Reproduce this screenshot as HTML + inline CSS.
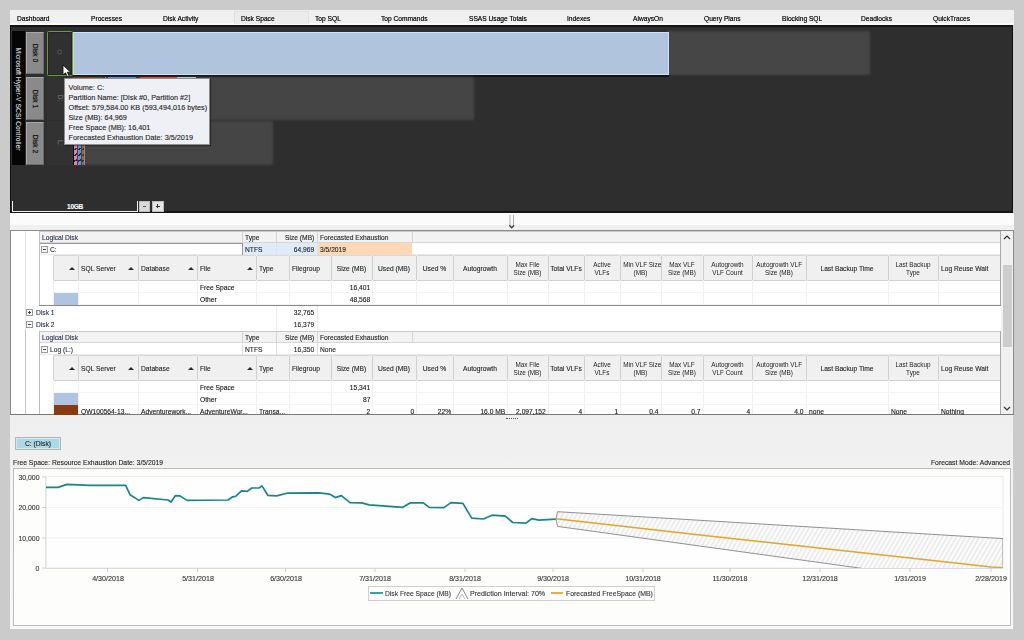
<!DOCTYPE html><html><head><meta charset="utf-8"><style>
html,body{margin:0;padding:0;}
body{width:1024px;height:640px;overflow:hidden;position:relative;background:#cbcbcb;font-family:"Liberation Sans",sans-serif;font-size:7px;color:#222;}
div{box-sizing:border-box;}
.t{position:absolute;white-space:nowrap;line-height:10px;height:10px;font-size:7.6px;transform:scaleX(0.88);-webkit-text-stroke:0.12px currentColor;}
</style></head><body>
<div style="position:absolute;left:10px;top:10px;width:1004px;height:15px;background:#f0f0f0;"></div>
<div style="position:absolute;left:10px;top:23px;width:1004px;height:2px;background:#fafafa;"></div>
<div style="position:absolute;left:234px;top:11px;width:75px;height:13px;background:#ececec;border:1px solid #e0e0e0;border-bottom:none;"></div>
<div class="t" style="left:17px;top:13.5px;transform-origin:0 50%;color:#0d0d0d;font-size:8px;transform:scaleX(0.83);text-shadow:0 0 0.3px #888;">Dashboard</div>
<div class="t" style="left:91px;top:13.5px;transform-origin:0 50%;color:#0d0d0d;font-size:8px;transform:scaleX(0.83);text-shadow:0 0 0.3px #888;">Processes</div>
<div class="t" style="left:163px;top:13.5px;transform-origin:0 50%;color:#0d0d0d;font-size:8px;transform:scaleX(0.83);text-shadow:0 0 0.3px #888;">Disk Activity</div>
<div class="t" style="left:241px;top:13.5px;transform-origin:0 50%;color:#0d0d0d;font-size:8px;transform:scaleX(0.83);text-shadow:0 0 0.3px #888;">Disk Space</div>
<div class="t" style="left:315px;top:13.5px;transform-origin:0 50%;color:#0d0d0d;font-size:8px;transform:scaleX(0.83);text-shadow:0 0 0.3px #888;">Top SQL</div>
<div class="t" style="left:381px;top:13.5px;transform-origin:0 50%;color:#0d0d0d;font-size:8px;transform:scaleX(0.83);text-shadow:0 0 0.3px #888;">Top Commands</div>
<div class="t" style="left:469px;top:13.5px;transform-origin:0 50%;color:#0d0d0d;font-size:8px;transform:scaleX(0.83);text-shadow:0 0 0.3px #888;">SSAS Usage Totals</div>
<div class="t" style="left:567px;top:13.5px;transform-origin:0 50%;color:#0d0d0d;font-size:8px;transform:scaleX(0.83);text-shadow:0 0 0.3px #888;">Indexes</div>
<div class="t" style="left:633px;top:13.5px;transform-origin:0 50%;color:#0d0d0d;font-size:8px;transform:scaleX(0.83);text-shadow:0 0 0.3px #888;">AlwaysOn</div>
<div class="t" style="left:704px;top:13.5px;transform-origin:0 50%;color:#0d0d0d;font-size:8px;transform:scaleX(0.83);text-shadow:0 0 0.3px #888;">Query Plans</div>
<div class="t" style="left:782px;top:13.5px;transform-origin:0 50%;color:#0d0d0d;font-size:8px;transform:scaleX(0.83);text-shadow:0 0 0.3px #888;">Blocking SQL</div>
<div class="t" style="left:861px;top:13.5px;transform-origin:0 50%;color:#0d0d0d;font-size:8px;transform:scaleX(0.83);text-shadow:0 0 0.3px #888;">Deadlocks</div>
<div class="t" style="left:933px;top:13.5px;transform-origin:0 50%;color:#0d0d0d;font-size:8px;transform:scaleX(0.83);text-shadow:0 0 0.3px #888;">QuickTraces</div>
<div style="position:absolute;left:10px;top:25px;width:1003px;height:188px;background:#2e2e2e;border:1px solid #111;border-top:2px solid #151515;border-bottom:2px solid #151515;"></div>
<div style="position:absolute;left:12px;top:31px;width:13px;height:134px;background:#050505;"></div>
<div class="t" style="left:-52.5px;top:93.5px;width:140px;text-align:center;color:#dcdcdc;transform:rotate(90deg) scaleX(0.89);font-size:7.6px;">Microsoft Hyper-V SCSI Controller</div>
<div style="position:absolute;left:26px;top:32px;width:18px;height:42px;background:#8a8a8a;border:1px solid #a9a9a9;border-right-color:#6a6a6a;border-bottom-color:#6a6a6a;"></div>
<div class="t" style="left:15px;top:48.0px;width:40px;text-align:center;color:#111;-webkit-text-stroke:0.25px #111;transform:rotate(90deg) scaleX(0.88);font-size:7.6px;">Disk 0</div>
<div style="position:absolute;left:26px;top:77px;width:18px;height:43px;background:#8a8a8a;border:1px solid #a9a9a9;border-right-color:#6a6a6a;border-bottom-color:#6a6a6a;"></div>
<div class="t" style="left:15px;top:93.5px;width:40px;text-align:center;color:#111;-webkit-text-stroke:0.25px #111;transform:rotate(90deg) scaleX(0.88);font-size:7.6px;">Disk 1</div>
<div style="position:absolute;left:26px;top:122px;width:18px;height:43px;background:#8a8a8a;border:1px solid #a9a9a9;border-right-color:#6a6a6a;border-bottom-color:#6a6a6a;"></div>
<div class="t" style="left:15px;top:138.5px;width:40px;text-align:center;color:#111;-webkit-text-stroke:0.25px #111;transform:rotate(90deg) scaleX(0.88);font-size:7.6px;">Disk 2</div>
<div style="position:absolute;left:667px;top:31px;width:203px;height:44px;background:#464646;filter:blur(1.2px);"></div>
<div style="position:absolute;left:47px;top:30.75px;width:26.299999999999997px;height:44.75px;background:#303030;border:1.4px solid #6c9c30;border-radius:1.5px;box-shadow:inset 0 0 0 1px #242424;"></div>
<svg style="position:absolute;left:56px;top:48px;" width="8" height="8" viewBox="0 0 8 8"><circle cx="3.7" cy="4.1" r="2.1" fill="none" stroke="#5a5a5a" stroke-width="0.9"/></svg>
<div style="position:absolute;left:73.3px;top:75px;width:595.7px;height:1.5px;background:#141414;"></div>
<div style="position:absolute;left:73.3px;top:31.5px;width:595.7px;height:43.5px;background:#b0c4de;border:1px solid #cfe0f7;border-left-color:#c4d6f0;"></div>
<div style="position:absolute;left:47px;top:76px;width:26px;height:44px;background:#323232;"></div>
<div style="position:absolute;left:73px;top:76.5px;width:401px;height:43.5px;background:#454545;filter:blur(1.2px);"></div>
<div style="position:absolute;left:73px;top:76.5px;width:17.5px;height:2.0px;background:#8a3b1c;"></div>
<div style="position:absolute;left:90.5px;top:76.5px;width:12.5px;height:2.0px;background:#4d5b2b;"></div>
<div style="position:absolute;left:104.5px;top:76.5px;width:1.5px;height:2.0px;background:#d07aa0;"></div>
<div style="position:absolute;left:107.5px;top:76.5px;width:28.5px;height:2.0px;background:#4a8fe0;"></div>
<div style="position:absolute;left:139.5px;top:76.5px;width:37.0px;height:2.0px;background:#e04a2c;"></div>
<div style="position:absolute;left:176.5px;top:76.5px;width:19.5px;height:2.0px;background:#b3c6dc;"></div>
<div class="t" style="left:50px;top:93px;width:20px;text-align:center;color:#6a6a6a;transform:rotate(90deg);font-size:7px;">D:</div>
<div style="position:absolute;left:47px;top:121px;width:26px;height:44px;background:#323232;"></div>
<div style="position:absolute;left:73px;top:121px;width:200px;height:44px;background:#454545;filter:blur(1.2px);"></div>
<div class="t" style="left:50px;top:138px;width:20px;text-align:center;color:#6a6a6a;transform:rotate(90deg);font-size:7px;">L:</div>
<div style="position:absolute;left:72.5px;top:144.5px;width:1.2000000000000028px;height:20.5px;background:#080808;"></div>
<div style="position:absolute;left:73.7px;top:144.5px;width:3.799999999999997px;height:20.5px;background:repeating-linear-gradient(150deg,#e87cae 0 3.6px,#3a2a30 3.6px 5px);"></div>
<div style="position:absolute;left:77.7px;top:144.5px;width:3.799999999999997px;height:20.5px;background:repeating-linear-gradient(150deg,#4e9cf0 0 3.6px,#1e2a3a 3.6px 5px);"></div>
<div style="position:absolute;left:81.7px;top:144.5px;width:2.200000000000003px;height:20.5px;background:repeating-linear-gradient(150deg,#b85a18 0 3.6px,#4a2a10 3.6px 5px);"></div>
<div style="position:absolute;left:84px;top:144.5px;width:1px;height:20.5px;background:#7d8fb0;"></div>
<div style="position:absolute;left:12px;top:201px;width:125.5px;height:11px;border:1px solid #f2f2f2;border-top:none;"></div>
<div class="t" style="left:-25px;width:200px;top:201.5px;text-align:center;transform-origin:50% 50%;color:#fff;font-weight:bold;font-size:6.5px;letter-spacing:-0.3px;transform:none;">10GB</div>
<div style="position:absolute;left:139px;top:201px;width:10.5px;height:10.5px;background:#d9d9d9;border:1px solid #bdbdbd;"></div>
<div style="position:absolute;left:151.5px;top:201px;width:12.0px;height:10.5px;background:#e6e6e6;border:1px solid #bdbdbd;"></div>
<div style="position:absolute;left:142.5px;top:205.5px;width:3px;height:1px;background:#555;"></div>
<div style="position:absolute;left:155.5px;top:205.5px;width:4px;height:1px;background:#333;"></div><div style="position:absolute;left:157px;top:204px;width:1px;height:4px;background:#333;"></div>
<div style="position:absolute;left:64px;top:78px;width:146px;height:66.5px;background:#eff0f5;border:1px solid #8e8e8e;box-shadow:1px 1px 1px rgba(0,0,0,.35);"></div>
<div class="t" style="left:68.5px;top:82.6px;transform-origin:0 50%;color:#262626;font-size:7.3px;letter-spacing:0;transform:none;">Volume: C:</div>
<div class="t" style="left:68.5px;top:92.6px;transform-origin:0 50%;color:#262626;font-size:7.3px;letter-spacing:0;transform:none;">Partition Name: [Disk #0, Partition #2]</div>
<div class="t" style="left:68.5px;top:102.6px;transform-origin:0 50%;color:#262626;font-size:7.3px;letter-spacing:0;transform:none;">Offset: 579,584.00 KB (593,494,016 bytes)</div>
<div class="t" style="left:68.5px;top:112.6px;transform-origin:0 50%;color:#262626;font-size:7.3px;letter-spacing:0;transform:none;">Size (MB): 64,969</div>
<div class="t" style="left:68.5px;top:122.6px;transform-origin:0 50%;color:#262626;font-size:7.3px;letter-spacing:0;transform:none;">Free Space (MB): 16,401</div>
<div class="t" style="left:68.5px;top:132.6px;transform-origin:0 50%;color:#262626;font-size:7.3px;letter-spacing:0;transform:none;">Forecasted Exhaustion Date: 3/5/2019</div>
<svg style="position:absolute;left:62px;top:64px;" width="12" height="14" viewBox="0 0 12 14"><path d="M1 1 L1 11 L3.5 8.8 L5.5 13 L7.2 12.2 L5.3 8.2 L8.6 8.2 Z" fill="#fff" stroke="#000" stroke-width="0.8"/></svg>
<div style="position:absolute;left:10px;top:213px;width:1004px;height:12px;background:#fbfbfb;"></div>
<div style="position:absolute;left:10px;top:225px;width:1004px;height:5px;background:#f0f0f0;"></div>
<svg style="position:absolute;left:507px;top:214px;" width="9" height="15" viewBox="0 0 9 15"><path d="M3 1 V11.5 M6.5 1 V11.5" stroke="#9a9a9a" stroke-width="0.8" fill="none"/><path d="M2.3 11.2 L4.7 13.7 L7.1 11.2" stroke="#3a3a3a" stroke-width="1.3" fill="none"/></svg>
<div style="position:absolute;left:10px;top:230px;width:1004px;height:185px;background:#fff;border:1px solid #8c8c8c;border-bottom:1px solid #777;"></div>
<div style="position:absolute;left:25px;top:231px;width:1px;height:183px;background:#e6e6e6;"></div>
<div style="position:absolute;left:39px;top:231px;width:1px;height:183px;background:#e6e6e6;"></div>
<div style="position:absolute;left:39px;top:231px;width:961px;height:12px;background:#f2f2f2;border-top:1px solid #c8c8c8;border-bottom:1px solid #d6d6d6;border-left:1px solid #c8c8c8;"></div>
<div style="position:absolute;left:242px;top:232px;width:1px;height:11px;background:#d4d4d4;"></div>
<div style="position:absolute;left:276px;top:232px;width:1px;height:11px;background:#d4d4d4;"></div>
<div style="position:absolute;left:317px;top:232px;width:1px;height:11px;background:#d4d4d4;"></div>
<div style="position:absolute;left:412px;top:232px;width:1px;height:11px;background:#d4d4d4;"></div>
<div class="t" style="left:41.5px;top:232.5px;transform-origin:0 50%;color:#1f2a44;">Logical Disk</div>
<div class="t" style="left:245px;top:232.5px;transform-origin:0 50%;color:#222;">Type</div>
<div class="t" style="right:710px;top:232.5px;text-align:right;transform-origin:100% 50%;color:#222;">Size (MB)</div>
<div class="t" style="left:320px;top:232.5px;transform-origin:0 50%;color:#222;">Forecasted Exhaustion</div>
<div style="position:absolute;left:39px;top:243px;width:961px;height:12px;background:#fff;border-left:1px solid #c8c8c8;border-bottom:1px solid #e8e8e8;"></div>
<div style="position:absolute;left:41px;top:246px;width:7px;height:7px;border:1px solid #9a9a9a;background:#f6f6f6;"></div>
<div style="position:absolute;left:43px;top:249px;width:3px;height:1px;background:#444;"></div>
<div class="t" style="left:50px;top:245px;transform-origin:0 50%;color:#1f2a44;">C:</div>
<div style="position:absolute;left:242px;top:243px;width:34px;height:12px;background:#deebf8;"></div>
<div style="position:absolute;left:276px;top:243px;width:41px;height:12px;background:#deebf8;"></div>
<div style="position:absolute;left:317px;top:243px;width:95px;height:12px;background:#fdd8b5;"></div>
<div style="position:absolute;left:276px;top:243px;width:1px;height:12px;background:#e2e2e2;"></div>
<div style="position:absolute;left:317px;top:243px;width:1px;height:12px;background:#e2e2e2;"></div>
<div style="position:absolute;left:39px;top:243px;width:204px;height:12.5px;border:1px solid #9a9a9a;"></div>
<div class="t" style="left:245px;top:245px;transform-origin:0 50%;color:#222;">NTFS</div>
<div class="t" style="right:710px;top:245px;text-align:right;transform-origin:100% 50%;color:#222;">64,969</div>
<div class="t" style="left:320px;top:245px;transform-origin:0 50%;color:#222;">3/5/2019</div>
<div style="position:absolute;left:39px;top:255px;width:961px;height:50px;background:#fff;border-left:1px solid #c8c8c8;"></div>
<div style="position:absolute;left:53px;top:255px;width:947px;height:26px;background:#f0f0f0;border-top:1px solid #d8d8d8;border-bottom:1px solid #d0d0d0;"></div>
<div style="position:absolute;left:53px;top:255px;width:1px;height:50px;background:#f0f0f0;"></div>
<div style="position:absolute;left:78px;top:255px;width:1px;height:50px;background:#f0f0f0;"></div>
<div style="position:absolute;left:137.5px;top:255px;width:1.0px;height:50px;background:#f0f0f0;"></div>
<div style="position:absolute;left:197px;top:255px;width:1px;height:50px;background:#f0f0f0;"></div>
<div style="position:absolute;left:256px;top:255px;width:1px;height:50px;background:#f0f0f0;"></div>
<div style="position:absolute;left:289px;top:255px;width:1px;height:50px;background:#f0f0f0;"></div>
<div style="position:absolute;left:331px;top:255px;width:1px;height:50px;background:#f0f0f0;"></div>
<div style="position:absolute;left:372px;top:255px;width:1px;height:50px;background:#f0f0f0;"></div>
<div style="position:absolute;left:416px;top:255px;width:1px;height:50px;background:#f0f0f0;"></div>
<div style="position:absolute;left:453px;top:255px;width:1px;height:50px;background:#f0f0f0;"></div>
<div style="position:absolute;left:507px;top:255px;width:1px;height:50px;background:#f0f0f0;"></div>
<div style="position:absolute;left:548px;top:255px;width:1px;height:50px;background:#f0f0f0;"></div>
<div style="position:absolute;left:584px;top:255px;width:1px;height:50px;background:#f0f0f0;"></div>
<div style="position:absolute;left:620px;top:255px;width:1px;height:50px;background:#f0f0f0;"></div>
<div style="position:absolute;left:661px;top:255px;width:1px;height:50px;background:#f0f0f0;"></div>
<div style="position:absolute;left:703px;top:255px;width:1px;height:50px;background:#f0f0f0;"></div>
<div style="position:absolute;left:752px;top:255px;width:1px;height:50px;background:#f0f0f0;"></div>
<div style="position:absolute;left:806px;top:255px;width:1px;height:50px;background:#f0f0f0;"></div>
<div style="position:absolute;left:888px;top:255px;width:1px;height:50px;background:#f0f0f0;"></div>
<div style="position:absolute;left:938px;top:255px;width:1px;height:50px;background:#f0f0f0;"></div>
<div style="position:absolute;left:53px;top:256px;width:1px;height:24px;background:#d0d0d0;"></div>
<div style="position:absolute;left:78px;top:256px;width:1px;height:24px;background:#d0d0d0;"></div>
<div style="position:absolute;left:137.5px;top:256px;width:1.0px;height:24px;background:#d0d0d0;"></div>
<div style="position:absolute;left:197px;top:256px;width:1px;height:24px;background:#d0d0d0;"></div>
<div style="position:absolute;left:256px;top:256px;width:1px;height:24px;background:#d0d0d0;"></div>
<div style="position:absolute;left:289px;top:256px;width:1px;height:24px;background:#d0d0d0;"></div>
<div style="position:absolute;left:331px;top:256px;width:1px;height:24px;background:#d0d0d0;"></div>
<div style="position:absolute;left:372px;top:256px;width:1px;height:24px;background:#d0d0d0;"></div>
<div style="position:absolute;left:416px;top:256px;width:1px;height:24px;background:#d0d0d0;"></div>
<div style="position:absolute;left:453px;top:256px;width:1px;height:24px;background:#d0d0d0;"></div>
<div style="position:absolute;left:507px;top:256px;width:1px;height:24px;background:#d0d0d0;"></div>
<div style="position:absolute;left:548px;top:256px;width:1px;height:24px;background:#d0d0d0;"></div>
<div style="position:absolute;left:584px;top:256px;width:1px;height:24px;background:#d0d0d0;"></div>
<div style="position:absolute;left:620px;top:256px;width:1px;height:24px;background:#d0d0d0;"></div>
<div style="position:absolute;left:661px;top:256px;width:1px;height:24px;background:#d0d0d0;"></div>
<div style="position:absolute;left:703px;top:256px;width:1px;height:24px;background:#d0d0d0;"></div>
<div style="position:absolute;left:752px;top:256px;width:1px;height:24px;background:#d0d0d0;"></div>
<div style="position:absolute;left:806px;top:256px;width:1px;height:24px;background:#d0d0d0;"></div>
<div style="position:absolute;left:888px;top:256px;width:1px;height:24px;background:#d0d0d0;"></div>
<div style="position:absolute;left:938px;top:256px;width:1px;height:24px;background:#d0d0d0;"></div>
<div style="position:absolute;left:1000px;top:256px;width:1px;height:24px;background:#d0d0d0;"></div>
<div class="t" style="left:53px;top:264.0px;width:25px;text-align:center;color:#222;"></div>
<div class="t" style="left:81px;top:264.0px;transform-origin:0 50%;color:#222;">SQL Server</div>
<div class="t" style="left:140.5px;top:264.0px;transform-origin:0 50%;color:#222;">Database</div>
<div class="t" style="left:200px;top:264.0px;transform-origin:0 50%;color:#222;">File</div>
<div class="t" style="left:259px;top:264.0px;transform-origin:0 50%;color:#222;">Type</div>
<div class="t" style="left:292px;top:264.0px;transform-origin:0 50%;color:#222;">Filegroup</div>
<div class="t" style="left:331px;top:264.0px;width:41px;text-align:center;color:#222;">Size (MB)</div>
<div class="t" style="left:372px;top:264.0px;width:44px;text-align:center;color:#222;">Used (MB)</div>
<div class="t" style="left:416px;top:264.0px;width:37px;text-align:center;color:#222;">Used %</div>
<div class="t" style="left:453px;top:264.0px;width:54px;text-align:center;color:#222;">Autogrowth</div>
<div style="position:absolute;left:507px;top:261.0px;width:41px;text-align:center;line-height:8px;white-space:nowrap;color:#222;font-size:7.6px;transform:scaleX(0.84);">Max File<br>Size (MB)</div>
<div class="t" style="left:548px;top:264.0px;width:36px;text-align:center;color:#222;">Total VLFs</div>
<div style="position:absolute;left:584px;top:261.0px;width:36px;text-align:center;line-height:8px;white-space:nowrap;color:#222;font-size:7.6px;transform:scaleX(0.84);">Active<br>VLFs</div>
<div style="position:absolute;left:620px;top:261.0px;width:41px;text-align:center;line-height:8px;white-space:nowrap;color:#222;font-size:7.6px;transform:scaleX(0.84);">Min VLF Size<br>(MB)</div>
<div style="position:absolute;left:661px;top:261.0px;width:42px;text-align:center;line-height:8px;white-space:nowrap;color:#222;font-size:7.6px;transform:scaleX(0.84);">Max VLF<br>Size (MB)</div>
<div style="position:absolute;left:703px;top:261.0px;width:49px;text-align:center;line-height:8px;white-space:nowrap;color:#222;font-size:7.6px;transform:scaleX(0.84);">Autogrowth<br>VLF Count</div>
<div style="position:absolute;left:752px;top:261.0px;width:54px;text-align:center;line-height:8px;white-space:nowrap;color:#222;font-size:7.6px;transform:scaleX(0.84);">Autogrowth VLF<br>Size (MB)</div>
<div class="t" style="left:806px;top:264.0px;width:82px;text-align:center;color:#222;">Last Backup Time</div>
<div style="position:absolute;left:888px;top:261.0px;width:50px;text-align:center;line-height:8px;white-space:nowrap;color:#222;font-size:7.6px;transform:scaleX(0.84);">Last Backup<br>Type</div>
<div class="t" style="left:941px;top:264.0px;transform-origin:0 50%;color:#222;">Log Reuse Wait</div>
<div style="position:absolute;left:68.5px;top:267px;width:0;height:0;border-left:3px solid transparent;border-right:3px solid transparent;border-bottom:3.5px solid #2a2a2a;"></div>
<div style="position:absolute;left:128.0px;top:267px;width:0;height:0;border-left:3px solid transparent;border-right:3px solid transparent;border-bottom:3.5px solid #2a2a2a;"></div>
<div style="position:absolute;left:187.5px;top:267px;width:0;height:0;border-left:3px solid transparent;border-right:3px solid transparent;border-bottom:3.5px solid #2a2a2a;"></div>
<div style="position:absolute;left:246.5px;top:267px;width:0;height:0;border-left:3px solid transparent;border-right:3px solid transparent;border-bottom:3.5px solid #2a2a2a;"></div>
<div style="position:absolute;left:53px;top:292px;width:947px;height:1px;background:#f4f4f4;"></div>
<div class="t" style="left:200px;top:282.5px;transform-origin:0 50%;color:#111;">Free Space</div>
<div class="t" style="right:654px;top:282.5px;text-align:right;transform-origin:100% 50%;color:#111;">16,401</div>
<div style="position:absolute;left:53px;top:304px;width:947px;height:1px;background:#f4f4f4;"></div>
<div style="position:absolute;left:54px;top:293px;width:24px;height:12px;background:#aec4e0;"></div>
<div class="t" style="left:200px;top:294.5px;transform-origin:0 50%;color:#111;">Other</div>
<div class="t" style="right:654px;top:294.5px;text-align:right;transform-origin:100% 50%;color:#111;">48,568</div>
<div style="position:absolute;left:39px;top:305px;width:962px;height:1px;background:#888;"></div>
<div style="position:absolute;left:1000px;top:231px;width:1px;height:74px;background:#a8a8a8;"></div>
<div style="position:absolute;left:39px;top:231px;width:1px;height:74px;background:#c4c4c4;"></div>
<div style="position:absolute;left:11px;top:306px;width:989px;height:12px;background:#fff;"></div>
<div style="position:absolute;left:276px;top:306px;width:1px;height:12px;background:#ececec;"></div>
<div style="position:absolute;left:317px;top:306px;width:1px;height:12px;background:#ececec;"></div>
<div style="position:absolute;left:26px;top:309px;width:7px;height:7px;border:1px solid #9a9a9a;background:#f6f6f6;"></div>
<div style="position:absolute;left:28px;top:312px;width:3px;height:1px;background:#444;"></div>
<div style="position:absolute;left:29px;top:311px;width:1px;height:3px;background:#333;"></div>
<div class="t" style="left:36px;top:307.7px;transform-origin:0 50%;color:#1f2a44;">Disk 1</div>
<div class="t" style="right:710px;top:307.7px;text-align:right;transform-origin:100% 50%;color:#222;">32,765</div>
<div style="position:absolute;left:11px;top:318px;width:989px;height:12px;background:#fff;"></div>
<div style="position:absolute;left:276px;top:318px;width:1px;height:12px;background:#ececec;"></div>
<div style="position:absolute;left:317px;top:318px;width:1px;height:12px;background:#ececec;"></div>
<div style="position:absolute;left:26px;top:321px;width:7px;height:7px;border:1px solid #9a9a9a;background:#f6f6f6;"></div>
<div style="position:absolute;left:28px;top:324px;width:3px;height:1px;background:#444;"></div>
<div class="t" style="left:36px;top:319.7px;transform-origin:0 50%;color:#1f2a44;">Disk 2</div>
<div class="t" style="right:710px;top:319.7px;text-align:right;transform-origin:100% 50%;color:#222;">16,379</div>
<div style="position:absolute;left:25px;top:306px;width:1px;height:108px;background:#e6e6e6;"></div>
<div style="position:absolute;left:25px;top:330px;width:1px;height:84px;background:#c4c4c4;"></div>
<div style="position:absolute;left:39px;top:331px;width:961px;height:12px;background:#f2f2f2;border-top:1px solid #c8c8c8;border-bottom:1px solid #d6d6d6;border-left:1px solid #c8c8c8;"></div>
<div style="position:absolute;left:242px;top:332px;width:1px;height:11px;background:#d4d4d4;"></div>
<div style="position:absolute;left:276px;top:332px;width:1px;height:11px;background:#d4d4d4;"></div>
<div style="position:absolute;left:317px;top:332px;width:1px;height:11px;background:#d4d4d4;"></div>
<div style="position:absolute;left:412px;top:332px;width:1px;height:11px;background:#d4d4d4;"></div>
<div class="t" style="left:41.5px;top:332.5px;transform-origin:0 50%;color:#1f2a44;">Logical Disk</div>
<div class="t" style="left:245px;top:332.5px;transform-origin:0 50%;color:#222;">Type</div>
<div class="t" style="right:710px;top:332.5px;text-align:right;transform-origin:100% 50%;color:#222;">Size (MB)</div>
<div class="t" style="left:320px;top:332.5px;transform-origin:0 50%;color:#222;">Forecasted Exhaustion</div>
<div style="position:absolute;left:39px;top:343px;width:961px;height:12px;background:#fff;border-left:1px solid #c8c8c8;border-bottom:1px solid #e8e8e8;"></div>
<div style="position:absolute;left:41px;top:346px;width:7px;height:7px;border:1px solid #9a9a9a;background:#f6f6f6;"></div>
<div style="position:absolute;left:43px;top:349px;width:3px;height:1px;background:#444;"></div>
<div class="t" style="left:50px;top:345px;transform-origin:0 50%;color:#1f2a44;">Log (L:)</div>
<div style="position:absolute;left:276px;top:343px;width:1px;height:12px;background:#e2e2e2;"></div>
<div style="position:absolute;left:317px;top:343px;width:1px;height:12px;background:#e2e2e2;"></div>
<div style="position:absolute;left:242px;top:343px;width:1px;height:12px;background:#e2e2e2;"></div>
<div class="t" style="left:245px;top:345px;transform-origin:0 50%;color:#222;">NTFS</div>
<div class="t" style="right:710px;top:345px;text-align:right;transform-origin:100% 50%;color:#222;">16,350</div>
<div class="t" style="left:320px;top:345px;transform-origin:0 50%;color:#222;">None</div>
<div style="position:absolute;left:39px;top:355px;width:961px;height:59px;background:#fff;border-left:1px solid #c8c8c8;"></div>
<div style="position:absolute;left:53px;top:355px;width:947px;height:26px;background:#f0f0f0;border-top:1px solid #d8d8d8;border-bottom:1px solid #d0d0d0;"></div>
<div style="position:absolute;left:53px;top:355px;width:1px;height:59px;background:#f0f0f0;"></div>
<div style="position:absolute;left:78px;top:355px;width:1px;height:59px;background:#f0f0f0;"></div>
<div style="position:absolute;left:137.5px;top:355px;width:1.0px;height:59px;background:#f0f0f0;"></div>
<div style="position:absolute;left:197px;top:355px;width:1px;height:59px;background:#f0f0f0;"></div>
<div style="position:absolute;left:256px;top:355px;width:1px;height:59px;background:#f0f0f0;"></div>
<div style="position:absolute;left:289px;top:355px;width:1px;height:59px;background:#f0f0f0;"></div>
<div style="position:absolute;left:331px;top:355px;width:1px;height:59px;background:#f0f0f0;"></div>
<div style="position:absolute;left:372px;top:355px;width:1px;height:59px;background:#f0f0f0;"></div>
<div style="position:absolute;left:416px;top:355px;width:1px;height:59px;background:#f0f0f0;"></div>
<div style="position:absolute;left:453px;top:355px;width:1px;height:59px;background:#f0f0f0;"></div>
<div style="position:absolute;left:507px;top:355px;width:1px;height:59px;background:#f0f0f0;"></div>
<div style="position:absolute;left:548px;top:355px;width:1px;height:59px;background:#f0f0f0;"></div>
<div style="position:absolute;left:584px;top:355px;width:1px;height:59px;background:#f0f0f0;"></div>
<div style="position:absolute;left:620px;top:355px;width:1px;height:59px;background:#f0f0f0;"></div>
<div style="position:absolute;left:661px;top:355px;width:1px;height:59px;background:#f0f0f0;"></div>
<div style="position:absolute;left:703px;top:355px;width:1px;height:59px;background:#f0f0f0;"></div>
<div style="position:absolute;left:752px;top:355px;width:1px;height:59px;background:#f0f0f0;"></div>
<div style="position:absolute;left:806px;top:355px;width:1px;height:59px;background:#f0f0f0;"></div>
<div style="position:absolute;left:888px;top:355px;width:1px;height:59px;background:#f0f0f0;"></div>
<div style="position:absolute;left:938px;top:355px;width:1px;height:59px;background:#f0f0f0;"></div>
<div style="position:absolute;left:53px;top:356px;width:1px;height:24px;background:#d0d0d0;"></div>
<div style="position:absolute;left:78px;top:356px;width:1px;height:24px;background:#d0d0d0;"></div>
<div style="position:absolute;left:137.5px;top:356px;width:1.0px;height:24px;background:#d0d0d0;"></div>
<div style="position:absolute;left:197px;top:356px;width:1px;height:24px;background:#d0d0d0;"></div>
<div style="position:absolute;left:256px;top:356px;width:1px;height:24px;background:#d0d0d0;"></div>
<div style="position:absolute;left:289px;top:356px;width:1px;height:24px;background:#d0d0d0;"></div>
<div style="position:absolute;left:331px;top:356px;width:1px;height:24px;background:#d0d0d0;"></div>
<div style="position:absolute;left:372px;top:356px;width:1px;height:24px;background:#d0d0d0;"></div>
<div style="position:absolute;left:416px;top:356px;width:1px;height:24px;background:#d0d0d0;"></div>
<div style="position:absolute;left:453px;top:356px;width:1px;height:24px;background:#d0d0d0;"></div>
<div style="position:absolute;left:507px;top:356px;width:1px;height:24px;background:#d0d0d0;"></div>
<div style="position:absolute;left:548px;top:356px;width:1px;height:24px;background:#d0d0d0;"></div>
<div style="position:absolute;left:584px;top:356px;width:1px;height:24px;background:#d0d0d0;"></div>
<div style="position:absolute;left:620px;top:356px;width:1px;height:24px;background:#d0d0d0;"></div>
<div style="position:absolute;left:661px;top:356px;width:1px;height:24px;background:#d0d0d0;"></div>
<div style="position:absolute;left:703px;top:356px;width:1px;height:24px;background:#d0d0d0;"></div>
<div style="position:absolute;left:752px;top:356px;width:1px;height:24px;background:#d0d0d0;"></div>
<div style="position:absolute;left:806px;top:356px;width:1px;height:24px;background:#d0d0d0;"></div>
<div style="position:absolute;left:888px;top:356px;width:1px;height:24px;background:#d0d0d0;"></div>
<div style="position:absolute;left:938px;top:356px;width:1px;height:24px;background:#d0d0d0;"></div>
<div style="position:absolute;left:1000px;top:356px;width:1px;height:24px;background:#d0d0d0;"></div>
<div class="t" style="left:53px;top:364.0px;width:25px;text-align:center;color:#222;"></div>
<div class="t" style="left:81px;top:364.0px;transform-origin:0 50%;color:#222;">SQL Server</div>
<div class="t" style="left:140.5px;top:364.0px;transform-origin:0 50%;color:#222;">Database</div>
<div class="t" style="left:200px;top:364.0px;transform-origin:0 50%;color:#222;">File</div>
<div class="t" style="left:259px;top:364.0px;transform-origin:0 50%;color:#222;">Type</div>
<div class="t" style="left:292px;top:364.0px;transform-origin:0 50%;color:#222;">Filegroup</div>
<div class="t" style="left:331px;top:364.0px;width:41px;text-align:center;color:#222;">Size (MB)</div>
<div class="t" style="left:372px;top:364.0px;width:44px;text-align:center;color:#222;">Used (MB)</div>
<div class="t" style="left:416px;top:364.0px;width:37px;text-align:center;color:#222;">Used %</div>
<div class="t" style="left:453px;top:364.0px;width:54px;text-align:center;color:#222;">Autogrowth</div>
<div style="position:absolute;left:507px;top:361.0px;width:41px;text-align:center;line-height:8px;white-space:nowrap;color:#222;font-size:7.6px;transform:scaleX(0.84);">Max File<br>Size (MB)</div>
<div class="t" style="left:548px;top:364.0px;width:36px;text-align:center;color:#222;">Total VLFs</div>
<div style="position:absolute;left:584px;top:361.0px;width:36px;text-align:center;line-height:8px;white-space:nowrap;color:#222;font-size:7.6px;transform:scaleX(0.84);">Active<br>VLFs</div>
<div style="position:absolute;left:620px;top:361.0px;width:41px;text-align:center;line-height:8px;white-space:nowrap;color:#222;font-size:7.6px;transform:scaleX(0.84);">Min VLF Size<br>(MB)</div>
<div style="position:absolute;left:661px;top:361.0px;width:42px;text-align:center;line-height:8px;white-space:nowrap;color:#222;font-size:7.6px;transform:scaleX(0.84);">Max VLF<br>Size (MB)</div>
<div style="position:absolute;left:703px;top:361.0px;width:49px;text-align:center;line-height:8px;white-space:nowrap;color:#222;font-size:7.6px;transform:scaleX(0.84);">Autogrowth<br>VLF Count</div>
<div style="position:absolute;left:752px;top:361.0px;width:54px;text-align:center;line-height:8px;white-space:nowrap;color:#222;font-size:7.6px;transform:scaleX(0.84);">Autogrowth VLF<br>Size (MB)</div>
<div class="t" style="left:806px;top:364.0px;width:82px;text-align:center;color:#222;">Last Backup Time</div>
<div style="position:absolute;left:888px;top:361.0px;width:50px;text-align:center;line-height:8px;white-space:nowrap;color:#222;font-size:7.6px;transform:scaleX(0.84);">Last Backup<br>Type</div>
<div class="t" style="left:941px;top:364.0px;transform-origin:0 50%;color:#222;">Log Reuse Wait</div>
<div style="position:absolute;left:68.5px;top:367px;width:0;height:0;border-left:3px solid transparent;border-right:3px solid transparent;border-bottom:3.5px solid #2a2a2a;"></div>
<div style="position:absolute;left:128.0px;top:367px;width:0;height:0;border-left:3px solid transparent;border-right:3px solid transparent;border-bottom:3.5px solid #2a2a2a;"></div>
<div style="position:absolute;left:187.5px;top:367px;width:0;height:0;border-left:3px solid transparent;border-right:3px solid transparent;border-bottom:3.5px solid #2a2a2a;"></div>
<div style="position:absolute;left:246.5px;top:367px;width:0;height:0;border-left:3px solid transparent;border-right:3px solid transparent;border-bottom:3.5px solid #2a2a2a;"></div>
<div style="position:absolute;left:53px;top:392px;width:947px;height:1px;background:#f4f4f4;"></div>
<div class="t" style="left:200px;top:382.5px;transform-origin:0 50%;color:#111;">Free Space</div>
<div class="t" style="right:654px;top:382.5px;text-align:right;transform-origin:100% 50%;color:#111;">15,341</div>
<div style="position:absolute;left:53px;top:404px;width:947px;height:1px;background:#f4f4f4;"></div>
<div style="position:absolute;left:54px;top:393px;width:24px;height:12px;background:#aec4e0;"></div>
<div class="t" style="left:200px;top:394.5px;transform-origin:0 50%;color:#111;">Other</div>
<div class="t" style="right:654px;top:394.5px;text-align:right;transform-origin:100% 50%;color:#111;">87</div>
<div style="position:absolute;left:53px;top:416px;width:947px;height:1px;background:#f4f4f4;"></div>
<div style="position:absolute;left:54px;top:405px;width:24px;height:12px;background:#8b3a10;"></div>
<div class="t" style="left:81px;top:406.5px;transform-origin:0 50%;color:#111;">QW100564-13...</div>
<div class="t" style="left:140.5px;top:406.5px;transform-origin:0 50%;color:#111;">Adventurework...</div>
<div class="t" style="left:200px;top:406.5px;transform-origin:0 50%;color:#111;">AdventureWor...</div>
<div class="t" style="left:259px;top:406.5px;transform-origin:0 50%;color:#111;">Transa...</div>
<div class="t" style="right:654px;top:406.5px;text-align:right;transform-origin:100% 50%;color:#111;">2</div>
<div class="t" style="right:610px;top:406.5px;text-align:right;transform-origin:100% 50%;color:#111;">0</div>
<div class="t" style="right:573px;top:406.5px;text-align:right;transform-origin:100% 50%;color:#111;">22%</div>
<div class="t" style="right:519px;top:406.5px;text-align:right;transform-origin:100% 50%;color:#111;">16.0 MB</div>
<div class="t" style="right:478px;top:406.5px;text-align:right;transform-origin:100% 50%;color:#111;">2,097,152</div>
<div class="t" style="right:442px;top:406.5px;text-align:right;transform-origin:100% 50%;color:#111;">4</div>
<div class="t" style="right:406px;top:406.5px;text-align:right;transform-origin:100% 50%;color:#111;">1</div>
<div class="t" style="right:365px;top:406.5px;text-align:right;transform-origin:100% 50%;color:#111;">0.4</div>
<div class="t" style="right:323px;top:406.5px;text-align:right;transform-origin:100% 50%;color:#111;">0.7</div>
<div class="t" style="right:274px;top:406.5px;text-align:right;transform-origin:100% 50%;color:#111;">4</div>
<div class="t" style="right:220px;top:406.5px;text-align:right;transform-origin:100% 50%;color:#111;">4.0</div>
<div class="t" style="left:809px;top:406.5px;transform-origin:0 50%;color:#111;">none</div>
<div class="t" style="left:891px;top:406.5px;transform-origin:0 50%;color:#111;">None</div>
<div class="t" style="left:941px;top:406.5px;transform-origin:0 50%;color:#111;">Nothing</div>
<div style="position:absolute;left:1001px;top:231px;width:12px;height:183px;background:#f0f0f0;"></div>
<div style="position:absolute;left:1000px;top:331px;width:1px;height:83px;background:#a8a8a8;"></div>
<div style="position:absolute;left:39px;top:331px;width:1px;height:83px;background:#bdbdbd;"></div>
<div style="position:absolute;left:1002.5px;top:264.5px;width:9.5px;height:82.5px;background:#cdcdcd;"></div>
<svg style="position:absolute;left:1003px;top:234px;" width="8" height="6" viewBox="0 0 8 6"><path d="M1 5 L4 2 L7 5" stroke="#333" stroke-width="1.2" fill="none"/></svg>
<svg style="position:absolute;left:1003px;top:406px;" width="8" height="6" viewBox="0 0 8 6"><path d="M1 1 L4 4 L7 1" stroke="#333" stroke-width="1.2" fill="none"/></svg>
<div style="position:absolute;left:10px;top:415px;width:1003px;height:214px;background:linear-gradient(#efefef 0,#f0f0f0 40px,#f3f3f3 60px,#f8f8f8 214px);"></div>
<div style="position:absolute;left:506px;top:418px;width:12px;height:1px;border-top:1px dotted #555;"></div>
<div style="position:absolute;left:15px;top:437px;width:46px;height:13px;background:#acd8e8;border:1px solid #bab4ae;box-shadow:inset 0 0 0 1px #cdeaf5;"></div>
<div class="t" style="left:-62px;width:200px;top:438.5px;text-align:center;transform-origin:50% 50%;color:#222;">C: (Disk)</div>
<div class="t" style="left:13px;top:457.7px;transform-origin:0 50%;color:#222;font-size:8px;transform:scaleX(0.85);">Free Space: Resource Exhaustion Date: 3/5/2019</div>
<div class="t" style="right:14px;top:457.7px;text-align:right;transform-origin:100% 50%;color:#222;font-size:8px;transform:scaleX(0.85);">Forecast Mode: Advanced</div>
<div style="position:absolute;left:13px;top:468px;width:998px;height:158px;background:#fdfdfb;border:1px solid #bcbcbc;"></div>
<svg style="position:absolute;left:0;top:0;" width="1024" height="640" viewBox="0 0 1024 640"><defs><pattern id="hatch" width="4" height="4" patternUnits="userSpaceOnUse" patternTransform="rotate(30)"><rect width="4" height="4" fill="#fbfbfb"/><line x1="0.75" y1="0" x2="0.75" y2="4" stroke="#e6e6e6" stroke-width="1.3"/></pattern><clipPath id="plot"><rect x="46" y="476" width="957" height="92"/></clipPath></defs><rect x="46.5" y="476.5" width="956.5" height="91.5" fill="#fefefe" stroke="#ebebeb"/><line x1="46" y1="507.5" x2="1003" y2="507.5" stroke="#f3f3ef" stroke-width="1"/><line x1="46" y1="538" x2="1003" y2="538" stroke="#f3f3ef" stroke-width="1"/><line x1="46" y1="568.5" x2="1003" y2="568.5" stroke="#dcdcdc" stroke-width="1"/><line x1="45.5" y1="476" x2="45.5" y2="568" stroke="#e4e4e4" stroke-width="1"/><line x1="42" y1="477" x2="46" y2="477" stroke="#cfcfcf" stroke-width="1"/><line x1="42" y1="507.5" x2="46" y2="507.5" stroke="#cfcfcf" stroke-width="1"/><line x1="42" y1="538" x2="46" y2="538" stroke="#cfcfcf" stroke-width="1"/><line x1="42" y1="568" x2="46" y2="568" stroke="#cfcfcf" stroke-width="1"/><line x1="107.5" y1="568" x2="107.5" y2="572" stroke="#cfcfcf" stroke-width="1"/><line x1="197.5" y1="568" x2="197.5" y2="572" stroke="#cfcfcf" stroke-width="1"/><line x1="285.5" y1="568" x2="285.5" y2="572" stroke="#cfcfcf" stroke-width="1"/><line x1="375" y1="568" x2="375" y2="572" stroke="#cfcfcf" stroke-width="1"/><line x1="465" y1="568" x2="465" y2="572" stroke="#cfcfcf" stroke-width="1"/><line x1="553" y1="568" x2="553" y2="572" stroke="#cfcfcf" stroke-width="1"/><line x1="643" y1="568" x2="643" y2="572" stroke="#cfcfcf" stroke-width="1"/><line x1="730" y1="568" x2="730" y2="572" stroke="#cfcfcf" stroke-width="1"/><line x1="820" y1="568" x2="820" y2="572" stroke="#cfcfcf" stroke-width="1"/><line x1="910" y1="568" x2="910" y2="572" stroke="#cfcfcf" stroke-width="1"/><line x1="991" y1="568" x2="991" y2="572" stroke="#cfcfcf" stroke-width="1"/><g clip-path="url(#plot)"><path d="M557.5,511.7 L1003,538.6 L1003,568 L859,568 L557.5,526.4 Z" fill="url(#hatch)" stroke="none"/><path d="M557.5,511.7 L1003,538.6 L1003,568" fill="none" stroke="#909090" stroke-width="1"/><path d="M557.5,526.4 L870,569.5" fill="none" stroke="#909090" stroke-width="1"/><path d="M557.5,511.7 L556,519 L557.5,526.4" fill="none" stroke="#909090" stroke-width="1"/><path d="M556,518.8 L700,535 L960,563.5 L991,567 L1003,567.6" fill="none" stroke="#e2a42a" stroke-width="1.4" stroke-linejoin="round"/></g><path d="M46,487.4 L58,487.4 L67,484.4 L90,485.4 L125.7,485.4 L130,494.7 L139,500.4 L143.3,497.6 L168,500.0 L171,502.0 L175.5,495.6 L180,495.9 L187,500.4 L228,500.0 L232.7,496.8 L235.6,496.4 L241.5,490.9 L247.3,491.4 L251.7,488.0 L259,488.0 L262,485.9 L267.8,495.3 L276.6,495.9 L287,493.2 L319,492.9 L329.6,494.1 L335.4,497.6 L341.3,495.6 L350,502.6 L361.8,502.9 L369,504.9 L402.8,507.3 L410,502.9 L423.3,502.9 L429.2,507.4 L443.8,507.6 L451,502.6 L462.9,503.4 L471.7,518.1 L483.4,519.0 L492.2,515.2 L505.3,516.1 L512.7,522.5 L525.9,523.1 L531.7,518.7 L539,520.2 L555.8,519.1" fill="none" stroke="#17868a" stroke-width="1.7" stroke-linejoin="round"/></svg>
<div class="t" style="right:984.2px;top:472.9px;text-align:right;transform-origin:100% 50%;color:#333;font-size:8px;transform:scaleX(0.86);">30,000</div>
<div class="t" style="right:984.2px;top:503.4px;text-align:right;transform-origin:100% 50%;color:#333;font-size:8px;transform:scaleX(0.86);">20,000</div>
<div class="t" style="right:984.2px;top:533.9px;text-align:right;transform-origin:100% 50%;color:#333;font-size:8px;transform:scaleX(0.86);">10,000</div>
<div class="t" style="right:984.2px;top:563.9px;text-align:right;transform-origin:100% 50%;color:#333;font-size:8px;transform:scaleX(0.86);">0</div>
<div class="t" style="left:7.5px;width:200px;top:573.7px;text-align:center;transform-origin:50% 50%;color:#333;font-size:8px;transform:scaleX(0.89);">4/30/2018</div>
<div class="t" style="left:97.5px;width:200px;top:573.7px;text-align:center;transform-origin:50% 50%;color:#333;font-size:8px;transform:scaleX(0.89);">5/31/2018</div>
<div class="t" style="left:185.5px;width:200px;top:573.7px;text-align:center;transform-origin:50% 50%;color:#333;font-size:8px;transform:scaleX(0.89);">6/30/2018</div>
<div class="t" style="left:275px;width:200px;top:573.7px;text-align:center;transform-origin:50% 50%;color:#333;font-size:8px;transform:scaleX(0.89);">7/31/2018</div>
<div class="t" style="left:365px;width:200px;top:573.7px;text-align:center;transform-origin:50% 50%;color:#333;font-size:8px;transform:scaleX(0.89);">8/31/2018</div>
<div class="t" style="left:453px;width:200px;top:573.7px;text-align:center;transform-origin:50% 50%;color:#333;font-size:8px;transform:scaleX(0.89);">9/30/2018</div>
<div class="t" style="left:543px;width:200px;top:573.7px;text-align:center;transform-origin:50% 50%;color:#333;font-size:8px;transform:scaleX(0.89);">10/31/2018</div>
<div class="t" style="left:630px;width:200px;top:573.7px;text-align:center;transform-origin:50% 50%;color:#333;font-size:8px;transform:scaleX(0.89);">11/30/2018</div>
<div class="t" style="left:720px;width:200px;top:573.7px;text-align:center;transform-origin:50% 50%;color:#333;font-size:8px;transform:scaleX(0.89);">12/31/2018</div>
<div class="t" style="left:810px;width:200px;top:573.7px;text-align:center;transform-origin:50% 50%;color:#333;font-size:8px;transform:scaleX(0.89);">1/31/2019</div>
<div class="t" style="left:891px;width:200px;top:573.7px;text-align:center;transform-origin:50% 50%;color:#333;font-size:8px;transform:scaleX(0.89);">2/28/2019</div>
<div style="position:absolute;left:368px;top:586px;width:287px;height:14.5px;background:#fefefe;border:1px solid #cfcfcf;"></div>
<div style="position:absolute;left:370px;top:592px;width:13px;height:2px;background:#3aa3a6;"></div>
<div class="t" style="left:385px;top:588.6px;transform-origin:0 50%;color:#333;font-size:8px;transform:scaleX(0.84);">Disk Free Space (MB)</div>
<svg style="position:absolute;left:455px;top:586px;" width="14" height="14" viewBox="0 0 14 14"><path d="M1 13 L7 2 L13 13" fill="none" stroke="#777" stroke-width="0.9"/><path d="M4 13 L7 8 L10 13" fill="none" stroke="#999" stroke-width="0.7"/></svg>
<div class="t" style="left:470px;top:588.6px;transform-origin:0 50%;color:#333;font-size:8px;transform:scaleX(0.89);">Prediction Interval: 70%</div>
<div style="position:absolute;left:551px;top:592px;width:12px;height:2px;background:#e8b040;"></div>
<div class="t" style="left:565.5px;top:588.6px;transform-origin:0 50%;color:#333;font-size:8px;transform:scaleX(0.86);">Forecasted FreeSpace (MB)</div>
</body></html>
